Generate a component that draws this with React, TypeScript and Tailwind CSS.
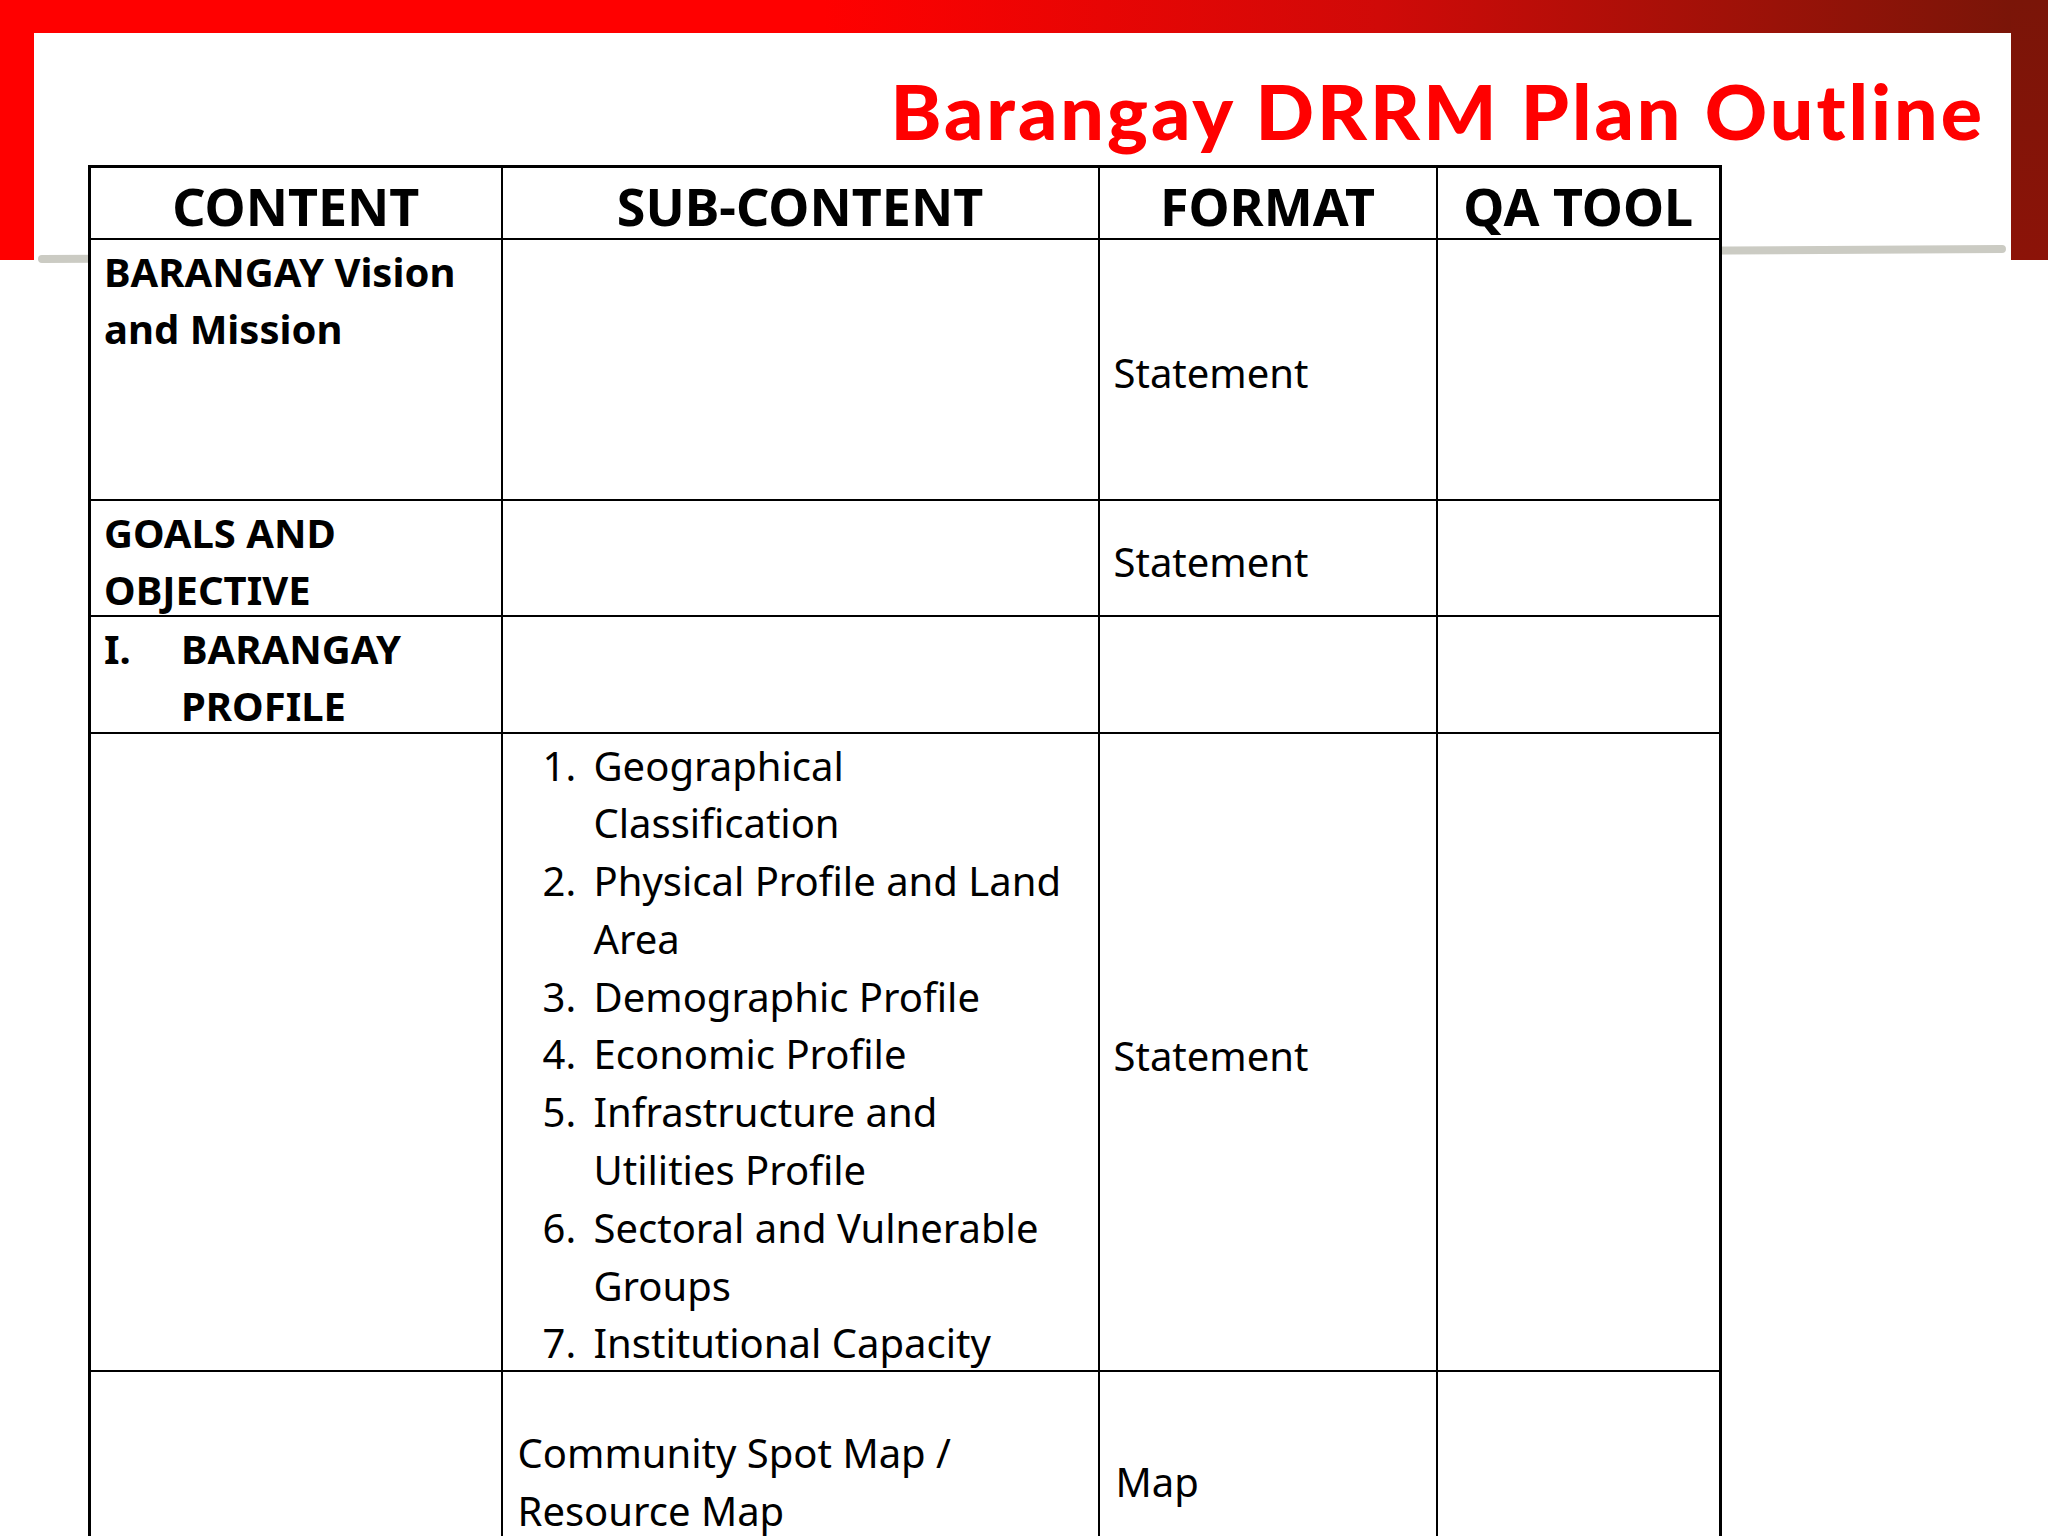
const profileItems = [
  { n: "1.", lines: ["Geographical", "Classification"] },
  { n: "2.", lines: ["Physical Profile and Land", "Area"] },
  { n: "3.", lines: ["Demographic Profile"] },
  { n: "4.", lines: ["Economic Profile"] },
  { n: "5.", lines: ["Infrastructure and", "Utilities Profile"] },
  { n: "6.", lines: ["Sectoral and Vulnerable", "Groups"] },
  { n: "7.", lines: ["Institutional Capacity"] },
];

function SlideFrame() {
  return (
    <div className="absolute inset-x-0 top-0 h-[260px]">
      <div className="flex h-full">
        <div className="w-[34px] bg-[#ff0000]" />
        <div className="flex flex-1 flex-col">
          <div className="h-[33px] bg-[linear-gradient(to_right,#ff0000_0%,#ff0000_40%,#d00a08_68%,#9a1208_88%,#7a1508_100%)]" />
          <div className="flex-1 bg-white" />
        </div>
        <div className="w-[37px] bg-[linear-gradient(to_bottom,#7a1508,#8c1308)]" />
      </div>
      <div className="absolute left-[38px] top-[250px] h-[8px] w-[1968px] -rotate-[0.29deg] rounded-sm bg-[#cbcbc3]" />
    </div>
  );
}

function HeadCell({ children }: { children: React.ReactNode }) {
  return (
    <th className="border-2 border-black p-0 text-center align-middle text-[52px] font-bold leading-[69px]">
      <span className="relative top-[3px]">{children}</span>
    </th>
  );
}

// PowerPoint text sits a few px lower in its box and may spill over the row edge
function Txt({ children }: { children: React.ReactNode }) {
  return <div className="relative top-[3px] -mb-[5px]">{children}</div>;
}

function Mid({ children, className = "top-[4px]" }: { children: React.ReactNode; className?: string }) {
  return <div className={"relative " + className}>{children}</div>;
}

export default function App() {
  return (
    <div className="relative h-[1536px] w-[2048px] overflow-hidden bg-white font-['Noto_Sans',sans-serif] text-black">
      <SlideFrame />

      <div className="relative pl-[88px] pr-[63px] pt-[72px]">
        <h1 className="text-right font-['Lato',sans-serif] text-[77px] font-black leading-[77px] tracking-[3px] text-[#ff0000]">
          Barangay DRRM Plan Outline
        </h1>

        <table className="mt-[16px] w-[1634px] table-fixed border-collapse border-[3px] border-black bg-white text-[40px] leading-[57.8px]">
          <colgroup>
            <col className="w-[412px]" />
            <col className="w-[597px]" />
            <col className="w-[338px]" />
            <col className="w-[284px]" />
          </colgroup>
          <thead>
            <tr className="h-[72px]">
              <HeadCell>CONTENT</HeadCell>
              <HeadCell>SUB-CONTENT</HeadCell>
              <HeadCell>FORMAT</HeadCell>
              <HeadCell>QA TOOL</HeadCell>
            </tr>
          </thead>
          <tbody>
            <tr className="h-[261px]">
              <td className="border-2 border-black px-[13px] py-0 align-top font-bold">
                <Txt>
                  BARANGAY Vision
                  <br />
                  and Mission
                </Txt>
              </td>
              <td className="border-2 border-black" />
              <td className="border-2 border-black px-[14px] py-0 align-middle">
                <Mid>Statement</Mid>
              </td>
              <td className="border-2 border-black" />
            </tr>
            <tr className="h-[116px]">
              <td className="border-2 border-black px-[13px] py-0 align-top font-bold">
                <Txt>
                  GOALS AND
                  <br />
                  OBJECTIVE
                </Txt>
              </td>
              <td className="border-2 border-black" />
              <td className="border-2 border-black px-[14px] py-0 align-middle">
                <Mid>Statement</Mid>
              </td>
              <td className="border-2 border-black" />
            </tr>
            <tr className="h-[117px]">
              <td className="border-2 border-black px-[13px] py-0 align-top font-bold">
                <Txt>
                  <div className="flex">
                    <span className="w-[77px] shrink-0">I.</span>
                    <span>
                      BARANGAY
                      <br />
                      PROFILE
                    </span>
                  </div>
                </Txt>
              </td>
              <td className="border-2 border-black" />
              <td className="border-2 border-black" />
              <td className="border-2 border-black" />
            </tr>
            <tr className="h-[638px]">
              <td className="border-2 border-black" />
              <td className="border-2 border-black py-0 pl-[40px] align-top">
                <Txt>
                  <ol>
                    {profileItems.map((item) => (
                      <li key={item.n} className="flex whitespace-nowrap">
                        <span className="w-[51px] shrink-0">{item.n}</span>
                        <span>
                          {item.lines.map((line, i) => (
                            <span key={i} className="block">
                              {line}
                            </span>
                          ))}
                        </span>
                      </li>
                    ))}
                  </ol>
                </Txt>
              </td>
              <td className="border-2 border-black px-[14px] py-0 align-middle">
                <Mid>Statement</Mid>
              </td>
              <td className="border-2 border-black" />
            </tr>
            <tr className="h-[222px]">
              <td className="border-2 border-black" />
              <td className="border-2 border-black px-[15px] py-0 align-middle">
                <Mid className="top-[1px]">
                  Community Spot Map /
                  <br />
                  Resource Map
                </Mid>
              </td>
              <td className="border-2 border-black px-[16px] py-0 align-middle">
                <Mid className="top-[1px]">Map</Mid>
              </td>
              <td className="border-2 border-black" />
            </tr>
          </tbody>
        </table>
      </div>
    </div>
  );
}
